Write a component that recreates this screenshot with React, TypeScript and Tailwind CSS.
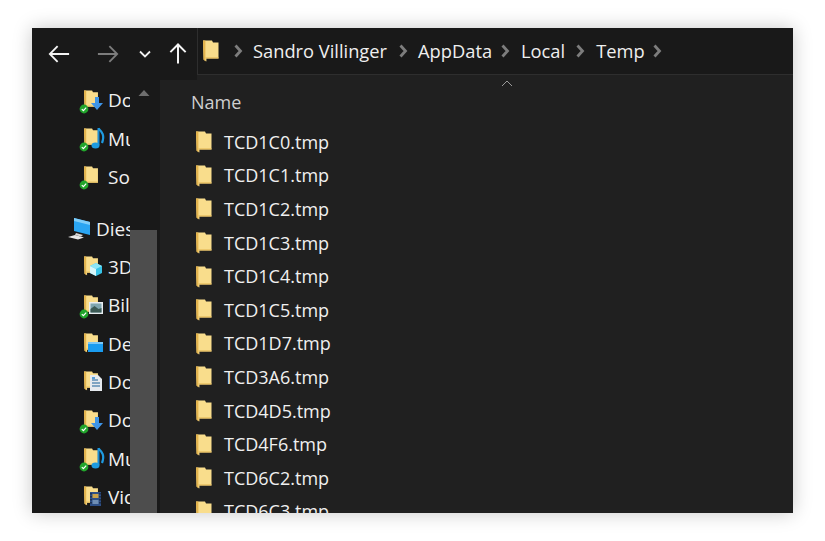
import React from 'react';

type Badge = 'down' | 'music' | 'cube' | 'image' | 'desktop' | 'doc' | 'film' | null;

const FolderShape: React.FC = () => (
  <>
    <path d="M0 0.500h9l1 2H15.500v16H3.400V21.500L0.600 19.500Z" fill="#f9dd8c" />
    <path d="M0 0.500h2.400v21L0.600 19.500Z" fill="#e3b34c" />
    <path d="M2.400 18.500H15.500v-1.200H2.400Z" fill="#e8bf5f" />
  </>
);

const Folder: React.FC<{ className?: string }> = ({ className }) => (
  <svg viewBox="0 0 16 22" className={className}>
    <FolderShape />
  </svg>
);

const Check: React.FC = () => (
  <g transform="translate(0 17)">
    <circle cx="6" cy="6" r="4.400" fill="#22a52c" />
    <path d="M3.800 6.100 5.400 7.600 8.200 4.600" fill="none" stroke="#fff" strokeWidth="1.200" />
  </g>
);

const Overlay: React.FC<{ kind: Badge }> = ({ kind }) => {
  if (kind === 'down')
    return <path d="M17 8h4v6h4l-6 7-6-7h4Z" fill="#3f95e6" />;
  if (kind === 'music')
    return (
      <>
        <path d="M20.500 1v17" stroke="#1f8fd6" strokeWidth="2" />
        <path d="M20.500 1.500C24 5 27 8 24 16" fill="none" stroke="#1f9be0" strokeWidth="2.200" />
        <ellipse cx="17.500" cy="18.500" rx="4" ry="3" fill="#1f9be0" />
      </>
    );
  if (kind === 'cube')
    return (
      <>
        <path d="M18 8l6 3v7l-6 3-6-3v-7Z" fill="#37c4e8" />
        <path d="M12 11l6 3 6-3-6-3Z" fill="#8ee6f7" />
        <path d="M12 11l6 3v7l-6-3Z" fill="#d8f6fb" />
      </>
    );
  if (kind === 'image')
    return (
      <>
        <rect x="11" y="8" width="14" height="12" fill="#e8edf0" />
        <rect x="12.500" y="9.500" width="11" height="9" fill="#7fa6b0" />
        <path d="M12.500 15l4-3 4 3 3-1v4.500h-11Z" fill="#3c5a55" />
      </>
    );
  if (kind === 'desktop')
    return (
      <>
        <rect x="10" y="10" width="15" height="10" fill="#1a9cf0" />
        <rect x="10" y="10" width="15" height="2" fill="#7cc8f7" />
      </>
    );
  if (kind === 'doc')
    return (
      <>
        <path d="M12 5h8l4 4v12H12Z" fill="#e6eaee" />
        <path d="M14 10h6M14 13h8M14 16h8" stroke="#5f8fb5" strokeWidth="1.300" />
        <rect x="14" y="7" width="3" height="2" fill="#5aa0d8" />
      </>
    );
  if (kind === 'film')
    return (
      <>
        <rect x="12" y="7" width="11" height="14" fill="#2d4f86" />
        <rect x="14.500" y="9" width="6" height="4" fill="#c9a24a" />
        <rect x="14.500" y="15" width="6" height="4" fill="#6f8fb5" />
        <path d="M13 8v12M22 8v12" stroke="#11161f" strokeWidth="1" strokeDasharray="1.500 1.500" />
      </>
    );
  return null;
};

const NavIcon: React.FC<{ kind: Badge; synced?: boolean }> = ({ kind, synced }) => (
  <svg viewBox="0 0 30 30" className="w-[30px] h-[30px] shrink-0">
    <g transform="translate(6 4) scale(0.9)">
      <FolderShape />
    </g>
    <g transform="translate(0 3)">
      <Overlay kind={kind} />
    </g>
    {synced && <Check />}
  </svg>
);

const PcIcon: React.FC = () => (
  <svg viewBox="0 0 26 24" className="w-[26px] h-6 shrink-0">
    <path d="M7 1l16 4v13L7 14Z" fill="#2aa5f2" />
    <path d="M7 1l16 4v3L7 4Z" fill="#7fcdf8" />
    <path d="M9 16l7 2-2 1.500-6-1.500Z" fill="#d8d8d8" />
    <path d="M1 20l7-2 9 2.500-6 2Z" fill="#e8e8e8" />
  </svg>
);

const Crumb: React.FC<{ className?: string }> = ({ className }) => (
  <svg viewBox="0 0 10 14" className={`w-2.5 h-3.5 shrink-0 ${className ?? ''}`}>
    <path d="M2.500 1.500 7.500 7l-5 5.500" fill="none" stroke="#7d7d7d" strokeWidth="2.800" />
  </svg>
);

const group1: { label: string; kind: Badge; synced?: boolean }[] = [
  { label: 'Downloads', kind: 'down', synced: true },
  { label: 'Musik', kind: 'music', synced: true },
  { label: 'Sonstiges', kind: null, synced: true },
];

const group2: { label: string; kind: Badge; synced?: boolean }[] = [
  { label: '3D-Objekte', kind: 'cube' },
  { label: 'Bilder', kind: 'image', synced: true },
  { label: 'Desktop', kind: 'desktop' },
  { label: 'Dokumente', kind: 'doc' },
  { label: 'Downloads', kind: 'down', synced: true },
  { label: 'Musik', kind: 'music', synced: true },
  { label: 'Videos', kind: 'film' },
];

const files = [
  'TCD1C0.tmp',
  'TCD1C1.tmp',
  'TCD1C2.tmp',
  'TCD1C3.tmp',
  'TCD1C4.tmp',
  'TCD1C5.tmp',
  'TCD1D7.tmp',
  'TCD3A6.tmp',
  'TCD4D5.tmp',
  'TCD4F6.tmp',
  'TCD6C2.tmp',
  'TCD6C3.tmp',
];

const NavRow: React.FC<{ label: string; kind: Badge; synced?: boolean }> = ({ label, kind, synced }) => (
  <div className="h-[38.3px] flex items-center pl-[46px] whitespace-nowrap">
    <NavIcon kind={kind} synced={synced} />
    <span className="text-[19px] text-[#f0f0f0]">{label}</span>
  </div>
);

export default function App() {
  return (
    <div className="w-[825px] h-[541px] bg-white pt-7 pl-8 overflow-hidden font-['Open_Sans',sans-serif]">
      <div className="w-[761px] h-[485px] flex flex-col overflow-hidden bg-[#191919] shadow-[0_0_18px_rgba(0,0,0,0.22)]">
        {/* toolbar */}
        <div className="h-[47px] shrink-0 flex items-stretch">
          <div className="w-[165px] shrink-0 flex items-center pl-4 pt-1">
            <svg viewBox="0 0 24 20" className="w-[22px] h-5">
              <path d="M23 10H2M10.500 1.500 2 10l8.500 8.500" fill="none" stroke="#f4f4f4" strokeWidth="2" />
            </svg>
            <svg viewBox="0 0 24 20" className="w-[22px] h-5 ml-[27px]">
              <path d="M1 10h21M13.500 1.500 22 10l-8.500 8.500" fill="none" stroke="#7c7c7c" strokeWidth="2" />
            </svg>
            <svg viewBox="0 0 12 8" className="w-3 h-2 ml-[20px]">
              <path d="M1 1.500 6 6.500l5-5" fill="none" stroke="#f0f0f0" strokeWidth="1.800" />
            </svg>
            <svg viewBox="0 0 20 24" className="w-[18px] h-[23px] ml-[18px]">
              <path d="M10 23V2M1.500 10.500 10 2l8.500 8.500" fill="none" stroke="#f6f6f6" strokeWidth="2.200" />
            </svg>
          </div>
          <div className="flex-1 flex items-center border-l border-b border-[#2e2e2e] pl-[5px] text-[18.300px] text-[#efefef] whitespace-nowrap">
            <Folder className="w-4 h-[22px] shrink-0" />
            <Crumb className="ml-[14px]" />
            <span className="ml-[10px]">Sandro Villinger</span>
            <Crumb className="ml-[11px]" />
            <span className="ml-[10px]">AppData</span>
            <Crumb className="ml-[8px]" />
            <span className="ml-[11px]">Local</span>
            <Crumb className="ml-[10px]" />
            <span className="ml-[11px]">Temp</span>
            <Crumb className="ml-[7px]" />
          </div>
        </div>

        <div className="flex-1 min-h-0 flex">
          {/* navigation pane */}
          <div className="w-[98px] shrink-0 overflow-hidden pt-[6.500px]">
            {group1.map((r, i) => (
              <NavRow key={i} {...r} />
            ))}
            <div className="h-[38.3px] mt-[13.500px] flex items-center pl-[35px] gap-[3px] whitespace-nowrap">
              <PcIcon />
              <span className="text-[19px] text-[#f0f0f0]">Dieser PC</span>
            </div>
            {group2.map((r, i) => (
              <NavRow key={i} {...r} />
            ))}
          </div>

          {/* nav scrollbar */}
          <div className="w-[27px] shrink-0 flex flex-col items-center">
            <svg viewBox="0 0 12 8" className="w-3 h-2 mt-[14px]">
              <path d="M6 1 11.500 7H.5Z" fill="#6e6e6e" />
            </svg>
            <div className="mt-[133px] flex-1 w-full bg-[#4d4d4d]" />
          </div>
          <div className="w-[3px] shrink-0" />

          {/* file list */}
          <div className="flex-1 min-w-0 flex flex-col overflow-hidden">
            <div className="h-[5px] shrink-0 flex">
              <div className="w-[37px] bg-[#191919]" />
              <div className="flex-1 bg-[#202020]" />
            </div>
            <div className="flex-1 min-h-0 bg-[#202020] overflow-hidden relative">
              <svg viewBox="0 0 12 7" className="absolute left-[341px] top-0 w-3 h-[7px]">
                <path d="M1 6l5-5 5 5" fill="none" stroke="#9a9a9a" strokeWidth="1" />
              </svg>
              <div className="h-[45.500px] flex items-center pl-[31px] text-[18px] text-[#cfcfcf]">Name</div>
              {files.map((f) => (
                <div key={f} className="h-[33.6px] flex items-center pl-9 whitespace-nowrap">
                  <Folder className="w-4 h-[22px] shrink-0" />
                  <span className="ml-3 text-[18px] text-[#f0f0f0]">{f}</span>
                </div>
              ))}
            </div>
          </div>
        </div>
      </div>
    </div>
  );
}
